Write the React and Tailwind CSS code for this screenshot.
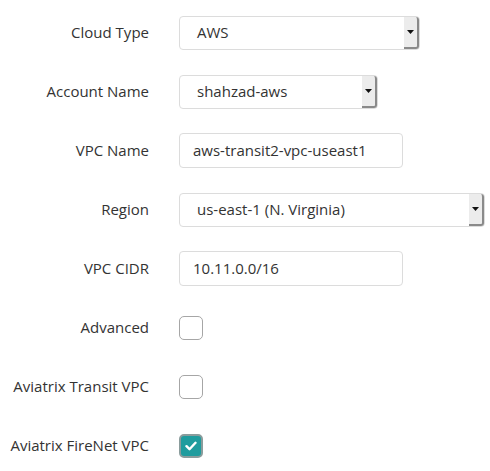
import React from "react";

function SelectBox({ value, width }) {
  return (
    <div className={`flex h-[34px] items-stretch rounded-[4px] border border-[#dcdcdc] bg-white ${width}`}>
      <div className="flex flex-1 items-center pl-[17px] text-[15px] text-[#333]">{value}</div>
      <div className="flex w-[15px] items-center justify-center rounded-r-[3px] border-r-2 border-b-2 border-[#8a8a8a] bg-[#ececec]">
        <svg width="7" height="4" viewBox="0 0 7 4"><path d="M0 0h7L3.5 4z" fill="#111" /></svg>
      </div>
    </div>
  );
}

function TextBox({ value }) {
  return (
    <div className="flex h-[35px] w-[224px] items-center rounded-[4px] border border-[#dcdcdc] bg-white pl-[13px] text-[15px] text-[#333]">
      {value}
    </div>
  );
}

function Check({ checked }) {
  return checked ? (
    <div className="flex h-[24px] w-[24px] items-center justify-center rounded-[5px] border-2 border-[#8a9c9c] bg-[#1f9c9e]">
      <svg width="12" height="10" viewBox="0 0 12 10"><path d="M1.5 5.2l3 3L10.5 1.8" fill="none" stroke="#fff" strokeWidth="2.4" strokeLinecap="round" strokeLinejoin="round" /></svg>
    </div>
  ) : (
    <div className="h-[24px] w-[24px] rounded-[5px] border border-[#a6a6a6] bg-white" />
  );
}

const rows = [
  ["Cloud Type", <SelectBox value="AWS" width="w-[241px]" />],
  ["Account Name", <SelectBox value="shahzad-aws" width="w-[199px]" />],
  ["VPC Name", <TextBox value="aws-transit2-vpc-useast1" />],
  ["Region", <SelectBox value="us-east-1 (N. Virginia)" width="w-[306px]" />],
  ["VPC CIDR", <TextBox value="10.11.0.0/16" />],
  ["Advanced", <Check />],
  ["Aviatrix Transit VPC", <Check />],
  ["Aviatrix FireNet VPC", <Check checked />],
];

export default function App() {
  return (
    <div className="h-[471px] w-[490px] bg-white pt-[3px] font-['Open_Sans',sans-serif]">
      <div className="grid grid-cols-[149px_1fr] gap-x-[30px]">
        {rows.map(([label, ctrl]) => (
          <React.Fragment key={label}>
            <div className="flex h-[59px] items-center justify-end whitespace-nowrap text-[15px] text-[#333]">{label}</div>
            <div className="flex h-[59px] items-center">{ctrl}</div>
          </React.Fragment>
        ))}
      </div>
    </div>
  );
}
